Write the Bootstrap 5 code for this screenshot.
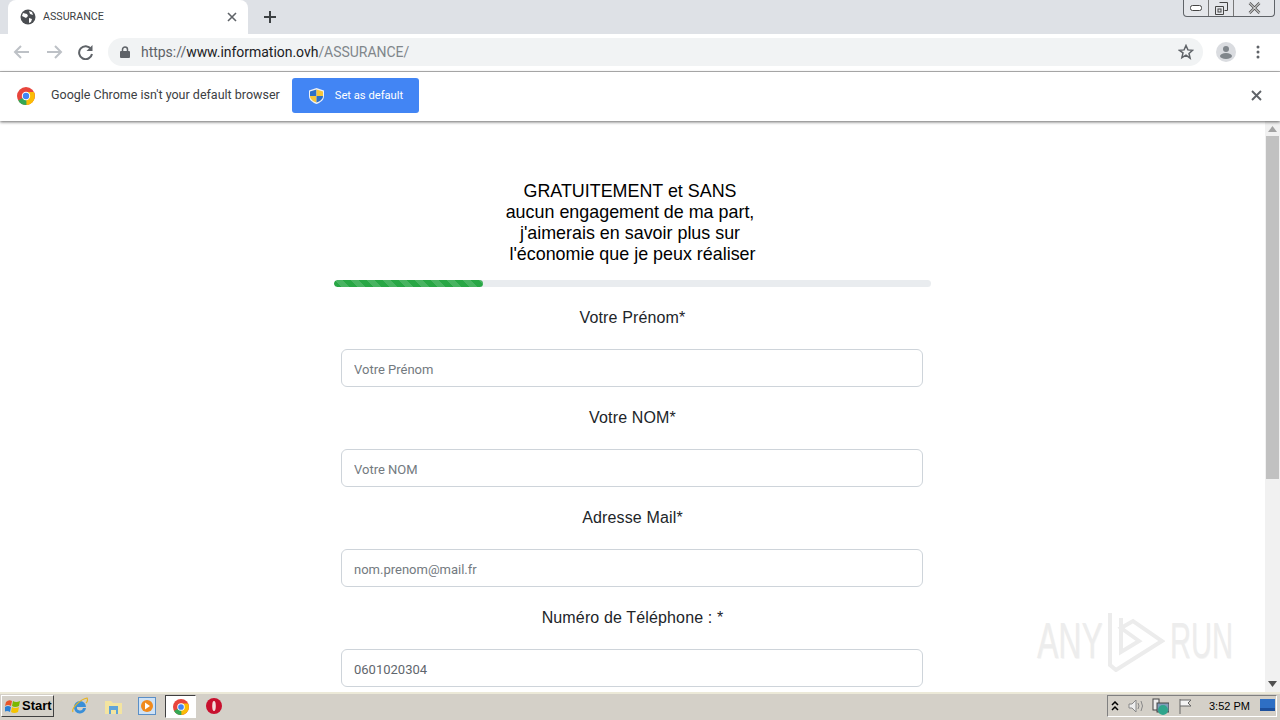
<!DOCTYPE html>
<html lang="fr">
<head>
<meta charset="utf-8">
<title>ASSURANCE</title>
<link href="https://cdn.jsdelivr.net/npm/bootstrap@5.3.0/dist/css/bootstrap.min.css" rel="stylesheet">
<style>
html,body{height:720px;overflow:hidden;margin:0}
body{font-family:"Liberation Sans",Arial,sans-serif;color:#000;background:#fff;width:1280px}
.chrome-font{font-family:"Roboto","Liberation Sans",sans-serif}
.tabstrip{height:34px;background:#dee1e6;padding-left:8px;position:relative}
.tabitem{width:240px;height:34px;background:#fff;border-radius:8px 8px 0 0;padding:0 11px 0 12px;font-size:10.7px;color:#3c4043}
.tabitem span{margin-left:7px}
.newtab{margin-left:16px}
.winctl{position:absolute;right:5px;top:0;width:92px;height:17px;border:1px solid #5f6368;border-top:0;border-radius:0 0 4px 4px;background:#e4e6ea}
.winctl div{height:16px}
.winctl .w1{width:25px;border-right:1px solid #777}
.winctl .w2{width:25px;border-right:1px solid #777}
.toolbar{height:38px;background:#fff;border-bottom:1px solid #b8b8b8;padding:0 0 1px 13px}
.navic{width:18px;margin-right:14px}
.omnibox{width:1095px;height:28px;background:#f1f3f4;border-radius:14px;margin-left:-1px;padding:0 9px 1px 12px;font-size:14px;color:#5f6368}
.omnibox b{font-weight:400;color:#202124}
.omnibox .urlrest{color:#80868b}
.omnibox .urltxt{margin-left:11px;padding-top:2px;letter-spacing:-.03px}
.avatar{margin-left:13px}
.dots{margin-left:20px}
.infobar{height:49px;background:#fff;padding:0 18px 2px 17px;box-shadow:0 1px 3px rgba(0,0,0,.6);position:relative;z-index:2;font-size:12.5px;color:#3c4043}
.infotxt{margin-left:16px}
.setdef{width:127px;height:35px;background:#4285f4;border-radius:3px;margin-left:12px;color:#fff;font-size:11.2px;padding-left:17px}
.setdef span{margin-left:11px;padding-top:1px}
.viewport{height:571px;position:relative;overflow:hidden}
.pagearea{width:1265px;height:571px;overflow:hidden;padding-top:60px}
.formwrap{width:597px;margin-left:334px}
.headline{font-size:17.9px;line-height:21px;text-align:center;margin:0;padding-right:5px}
.pbar{height:7px;margin-top:15px;border-radius:4px;background:#e9ecef}
.pbar .progress-bar{width:149px;background-color:#28a745;border-radius:4px}
.fieldlabel{display:block;margin:0;padding:19px 0 19px;font-size:16px;letter-spacing:.14px;line-height:24px;text-align:center;color:#212529}
.fieldbox{width:582px;height:38px;margin:0 0 0 7px;padding:7px 12px 5px;font-size:13px;font-family:"Roboto",sans-serif;color:#5f666d;border-color:#ced4da}
.fieldbox::placeholder{color:#737a80;opacity:1}
.sbar{position:absolute;right:0;top:0;width:15px;height:571px;background:#f1f1f1}
.sbar .thumb{position:absolute;left:1px;right:1px;top:15px;height:343px;background:#c1c1c1}
.sbar svg{position:absolute;left:3px}
.sb-up{top:5px}
.sb-down{bottom:5px}
.wmark{position:absolute;left:1037px;top:489px;width:200px;height:62px;color:#ededed;font-size:50px;line-height:62px;text-shadow:1px 1px 1px #f4f4f4}
.wm-a,.wm-b{position:absolute;top:0;transform-origin:0 50%;white-space:nowrap}
.wm-a{left:0;transform:scaleX(.64)}
.wm-b{left:133px;transform:scaleX(.58)}
.wm-tri{position:absolute;left:70px;top:0}
.taskbar{height:28px;background:#d4d0c8;border-top:2px solid #ece9d8;font-family:"Liberation Sans",sans-serif;padding-left:1px}
.startbtn{width:53px;height:22px;background:#d4d0c8;border:1px solid;border-color:#fff #404040 #404040 #fff;font-weight:700;font-size:13px;color:#000;padding-left:3px;margin-top:1px}
.startbtn span{margin-left:1px}
.quick{margin-left:17px;gap:15px}
.quick svg{display:block;flex-shrink:0}
.activebtn{width:31px;height:23px;background:#fff;border:1px solid;border-color:#404040 #fff #fff #404040;margin:1px -5px 0 -6px}
.tray{width:170px;height:22px;border:1px solid;border-color:#808080 #fff #fff #808080;margin-left:auto;margin-right:3px;margin-top:1px;padding-left:3px;font-size:11px;color:#000;white-space:nowrap}
.tray svg{flex-shrink:0}
.t-sp{margin-left:9px}
.t-ne{margin-left:7px}
.t-fl{margin-left:9px}
.clock{margin-left:16px;margin-right:11px;width:40px}
</style>
</head>
<body class="d-flex flex-column">

<div class="tabstrip d-flex align-items-start chrome-font">
  <div class="tabitem d-flex align-items-center">
    <svg width="16" height="16" viewBox="0 0 16 16"><circle cx="8" cy="8" r="7.500" fill="#4a4d51"/><path d="M3 4l4 1 1 2-2 2-2-1-2-1zM9 9l3 1-1 3-2 1zM9 2l3 1 1 3-3-1z" fill="#fff"/></svg>
    <span class="flex-grow-1">ASSURANCE</span>
    <svg width="10" height="10" viewBox="0 0 10 10"><path d="M1 1l8 8M9 1l-8 8" stroke="#5f6368" stroke-width="1.600"/></svg>
  </div>
  <svg class="newtab align-self-center" width="12" height="12" viewBox="0 0 12 12"><path d="M6 0v12M0 6h12" stroke="#3c4043" stroke-width="2"/></svg>
  <div class="winctl d-flex">
    <div class="w1 d-flex align-items-center justify-content-center"><svg width="12" height="6" viewBox="0 0 12 6"><rect x=".5" y=".5" width="11" height="5" rx="2" fill="#fff" stroke="#444"/></svg></div>
    <div class="w2 d-flex align-items-center justify-content-center"><svg width="13" height="13" viewBox="0 0 13 13"><path d="M4.500.5h8v8h-3M.5 4.500h8v8h-8z" fill="none" stroke="#444"/><rect x="3" y="7" width="3" height="3" fill="none" stroke="#444"/></svg></div>
    <div class="flex-grow-1 d-flex align-items-center justify-content-center"><svg width="13" height="12" viewBox="0 0 13 12"><path d="M1.500 1l10 10M11.500 1l-10 10" stroke="#555" stroke-width="2.500"/><path d="M1.500 1l10 10M11.500 1l-10 10" stroke="#fff" stroke-width="1"/></svg></div>
  </div>
</div>

<div class="toolbar d-flex align-items-center chrome-font">
  <svg class="navic" width="18" height="16" viewBox="0 0 18 16"><path d="M16 8H3M8 2L2 8l6 6" fill="none" stroke="#bdc1c6" stroke-width="2"/></svg>
  <svg class="navic" width="18" height="16" viewBox="0 0 18 16"><path d="M2 8h13M10 2l6 6-6 6" fill="none" stroke="#bdc1c6" stroke-width="2"/></svg>
  <svg class="navic" width="18" height="16" viewBox="0 0 18 16"><path d="M14 5a6.500 6.500 0 1 0 1 5" fill="none" stroke="#5f6368" stroke-width="2"/><path d="M15.500 1v6h-6z" fill="#5f6368"/></svg>
  <div class="omnibox d-flex align-items-center">
    <svg width="10" height="12" viewBox="0 0 10 12"><path d="M2.500 5V3.500a2.500 2.500 0 0 1 5 0V5" fill="none" stroke="#5f6368" stroke-width="1.500"/><rect y="5" width="10" height="7" rx="1" fill="#5f6368"/></svg>
    <span class="urltxt flex-grow-1">https://<b>www.information.ovh</b><span class="urlrest">/ASSURANCE/</span></span>
    <svg width="16" height="16" viewBox="0 0 16 16"><path d="M8 1.500l1.900 4.400 4.700.4-3.600 3.100 1.100 4.700L8 11.100l-4.100 2.500L5 8.900 1.400 6.300l4.700-.4z" fill="none" stroke="#5f6368" stroke-width="1.500"/></svg>
  </div>
  <svg class="avatar" width="20" height="20" viewBox="0 0 20 20"><circle cx="10" cy="10" r="10" fill="#dadce0"/><circle cx="10" cy="7" r="3" fill="#80868b"/><ellipse cx="10" cy="14" rx="6" ry="3" fill="#80868b"/></svg>
  <svg class="dots" width="4" height="14" viewBox="0 0 4 14"><circle cx="2" cy="2" r="1.500" fill="#5f6368"/><circle cx="2" cy="7" r="1.500" fill="#5f6368"/><circle cx="2" cy="12" r="1.500" fill="#5f6368"/></svg>
</div>

<div class="infobar d-flex align-items-center chrome-font">
  <svg width="18" height="18" viewBox="0 0 18 18"><circle cx="9" cy="9" r="9" fill="#e8453c"/><path d="M9 9L1.200 13.500A9 9 0 0 0 9 18h.5l4-7z" fill="#34a853"/><path d="M9 5h7.900A9 9 0 0 1 9.500 18z" fill="#fbbc05"/><circle cx="9" cy="9" r="4.200" fill="#fff"/><circle cx="9" cy="9" r="3.200" fill="#4285f4"/></svg>
  <span class="infotxt">Google Chrome isn't your default browser</span>
  <div class="setdef d-flex align-items-center">
    <svg width="15" height="16" viewBox="0 0 15 16"><path d="M7.500 0L15 2.500V8c0 4-3.500 6.500-7.500 8C3.500 14.500 0 12 0 8V2.500z" fill="#eef1f6"/><path d="M7.500 1.500L1 3.400V8h6.500z" fill="#2c6fc9"/><path d="M7.500 1.500L14 3.400V8H7.500z" fill="#f5c53a"/><path d="M1 8h6.500v6.500C4 13.200 1 11.200 1 8z" fill="#f5c53a"/><path d="M14 8H7.500v6.500C11 13.200 14 11.200 14 8z" fill="#2c6fc9"/></svg>
    <span>Set as default</span>
  </div>
  <svg class="ms-auto" width="11" height="11" viewBox="0 0 11 11"><path d="M1 1l9 9M10 1l-9 9" stroke="#5f6368" stroke-width="1.900"/></svg>
</div>

<div class="viewport">
  <div class="pagearea">
    <div class="formwrap">
      <p class="headline">GRATUITEMENT et SANS<br>aucun engagement de ma part,<br>j'aimerais en savoir plus sur<br>&nbsp;l'économie que je peux réaliser</p>
      <div class="progress pbar"><div class="progress-bar progress-bar-striped" role="progressbar"></div></div>
      <label class="fieldlabel" for="f1">Votre Prénom*</label>
      <input id="f1" class="form-control fieldbox" type="text" placeholder="Votre Prénom">
      <label class="fieldlabel" for="f2">Votre NOM*</label>
      <input id="f2" class="form-control fieldbox" type="text" placeholder="Votre NOM">
      <label class="fieldlabel" for="f3">Adresse Mail*</label>
      <input id="f3" class="form-control fieldbox" type="text" placeholder="nom.prenom@mail.fr">
      <label class="fieldlabel" for="f4">Numéro de Téléphone : *</label>
      <input id="f4" class="form-control fieldbox" type="text" value="0601020304">
    </div>
  </div>
  <div class="sbar">
    <svg class="sb-up" width="9" height="6" viewBox="0 0 9 6"><path d="M4.500 0L9 6H0z" fill="#a3a3a3"/></svg>
    <div class="thumb"></div>
    <svg class="sb-down" width="9" height="6" viewBox="0 0 9 6"><path d="M4.500 6L9 0H0z" fill="#505050"/></svg>
  </div>
  <div class="wmark">
    <span class="wm-a">ANY</span>
    <svg class="wm-tri" width="58" height="62" viewBox="0 0 58 62"><path d="M3 3v52l6 5 46-29L26 11 14 18l18 13-18 11V8" fill="none" stroke="#ececec" stroke-width="4"/></svg>
    <span class="wm-b">RUN</span>
  </div>
</div>

<div class="taskbar d-flex align-items-start">
  <div class="startbtn d-flex align-items-center">
    <svg width="16" height="15" viewBox="0 0 16 15"><path d="M1 3q3-3 6-1l-1 5q-3-2-6 0z" fill="#e8562a"/><path d="M8 2q3 2 7 0l-1 5q-4 2-7 0z" fill="#7ab800"/><path d="M0 8q3-2 6 0l-1 5q-3-2-6 0z" fill="#2a7fd5"/><path d="M7 8q3 2 7 0l-1 5q-4 2-7 0z" fill="#f5c300"/></svg>
    <span>Start</span>
  </div>
  <div class="quick d-flex align-items-center">
    <svg width="18" height="18" viewBox="0 0 18 18"><path d="M3 10a6 6 0 1 1 12 0H6a3 3 0 0 0 6 1h3a6 6 0 0 1-12-1z" fill="#3a8fd8"/><path d="M2 15C0 11 10 2 16 1c1 2 0 4-1 5" fill="none" stroke="#e6b422" stroke-width="1.200"/></svg>
    <svg width="19" height="18" viewBox="0 0 19 18"><path d="M1 4h6l2 2h9v11H1z" fill="#f3e4a0"/><path d="M5 9h9v8h-2v-4H7v4H5z" fill="#5fa3d8"/></svg>
    <svg width="18" height="18" viewBox="0 0 18 18"><rect x=".5" y=".5" width="17" height="17" fill="#cfe2f5" stroke="#5a8fc7"/><circle cx="9" cy="9" r="6" fill="#f08a1d"/><path d="M7 5.500l5 3.500-5 3.500z" fill="#fff"/></svg>
    <div class="activebtn d-flex align-items-center justify-content-center">
      <svg width="16" height="16" viewBox="0 0 18 18"><circle cx="9" cy="9" r="9" fill="#e8453c"/><path d="M9 9L1.200 13.500A9 9 0 0 0 9 18h.5l4-7z" fill="#34a853"/><path d="M9 5h7.900A9 9 0 0 1 9.500 18z" fill="#fbbc05"/><circle cx="9" cy="9" r="4.200" fill="#fff"/><circle cx="9" cy="9" r="3.200" fill="#4285f4"/></svg>
    </div>
    <svg width="16" height="16" viewBox="0 0 16 16"><circle cx="8" cy="8" r="8" fill="#c8102e"/><ellipse cx="8" cy="8" rx="1.800" ry="5" fill="#f3dcdc"/></svg>
  </div>
  <div class="tray d-flex align-items-center">
    <svg width="8" height="10" viewBox="0 0 8 10"><path d="M1 4l3-3 3 3M1 9l3-3 3 3" fill="none" stroke="#000" stroke-width="1.500"/></svg>
    <svg class="t-sp" width="17" height="16" viewBox="0 0 17 16"><path d="M1 6h3l4-4v12l-4-4H1z" fill="#eee" stroke="#888"/><path d="M10 5q2 3 0 6M13 3q3 5 0 10" fill="none" stroke="#888"/></svg>
    <svg class="t-ne" width="17" height="17" viewBox="0 0 17 17"><rect x="1" y="1" width="6" height="11" fill="#eee" stroke="#444"/><rect x="5" y="5" width="12" height="9" fill="#7f9db9" stroke="#444"/><circle cx="11" cy="12" r="5" fill="#2fa58c"/></svg>
    <svg class="t-fl" width="15" height="16" viewBox="0 0 15 16"><path d="M2 1v15M2 2h11l-3 3 3 3H2" fill="#f4f4f4" stroke="#666"/></svg>
    <span class="clock">3:52 PM</span>
    <svg width="15" height="14" viewBox="0 0 15 14"><rect width="15" height="12" fill="#2e6fc4"/><rect y="9" width="15" height="3" fill="#1c4f9c"/></svg>
  </div>
</div>
</body>
</html>
